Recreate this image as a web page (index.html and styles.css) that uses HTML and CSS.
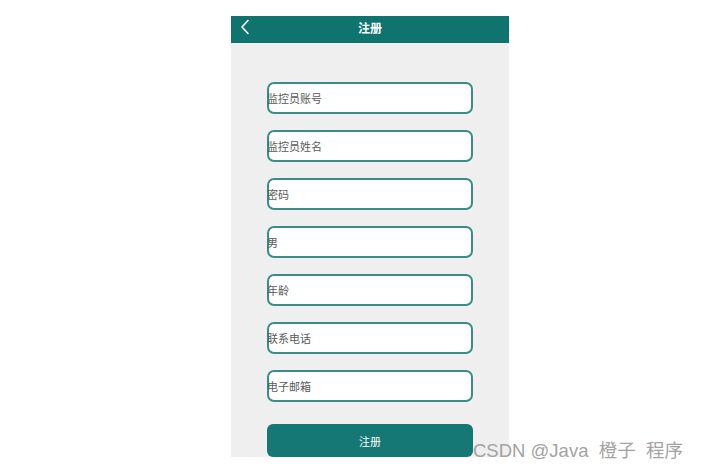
FILE: index.html
```html
<!DOCTYPE html>
<html lang="zh">
<head>
<meta charset="utf-8">
<title>注册</title>
<link rel="stylesheet" href="styles.css">
</head>
<body>
<div class="phone">
  <header class="bar">
    <svg class="back" width="10" height="16" viewBox="0 0 10 16"><path d="M8 1.5 L2 8 L8 14.5" fill="none" stroke="#ffffff" stroke-width="1.6" stroke-linecap="round" stroke-linejoin="round"/></svg>
    <span class="title">注册</span>
  </header>
  <main class="content">
    <div class="field"><span class="ph">监控员账号</span></div>
    <div class="field"><span class="ph">监控员姓名</span></div>
    <div class="field"><span class="ph">密码</span></div>
    <div class="field"><span class="ph">男</span></div>
    <div class="field"><span class="ph">年龄</span></div>
    <div class="field"><span class="ph">联系电话</span></div>
    <div class="field"><span class="ph">电子邮箱</span></div>
    <div class="btn">注册</div>
  </main>
</div>
<div class="watermark">CSDN @Java&nbsp; 橙子&nbsp; 程序</div>
</body>
</html>
```
FILE: styles.css
```css
html, body {
  margin: 0;
  padding: 0;
  background: #ffffff;
}
body {
  padding: 16px 0 0 231px;
  font-family: "Liberation Sans", "Noto Sans CJK SC", sans-serif;
}
.phone {
  width: 278px;
}
.bar {
  position: relative;
  box-sizing: border-box;
  height: 27px;
  padding-bottom: 4px;
  background: #0f736e;
  display: flex;
  align-items: center;
  justify-content: center;
}
.back {
  position: absolute;
  left: 9px;
  top: 3px;
}
.title {
  color: #ffffff;
  font-size: 12px;
  font-weight: bold;
}
.content {
  background: #efefef;
  padding: 39px 0 0 36px;
  display: flex;
  flex-direction: column;
  gap: 16px;
}
.field {
  box-sizing: border-box;
  width: 206px;
  height: 32px;
  border: 2px solid #3a8c86;
  border-radius: 7px;
  background: #ffffff;
  display: flex;
  align-items: center;
}
.ph {
  margin-left: -2px;
  color: #5a5a5a;
  font-size: 11px;
}
.btn {
  margin-top: 6px;
  width: 206px;
  height: 33px;
  border-radius: 6px;
  background: #167874;
  color: #ffffff;
  font-size: 11px;
  display: flex;
  align-items: center;
  justify-content: center;
}
.watermark {
  position: absolute;
  left: 473px;
  top: 436px;
  font-size: 18.5px;
  color: #a3a3a3;
  font-family: "Liberation Sans", "Noto Sans CJK SC", sans-serif;
  white-space: nowrap;
}
```
